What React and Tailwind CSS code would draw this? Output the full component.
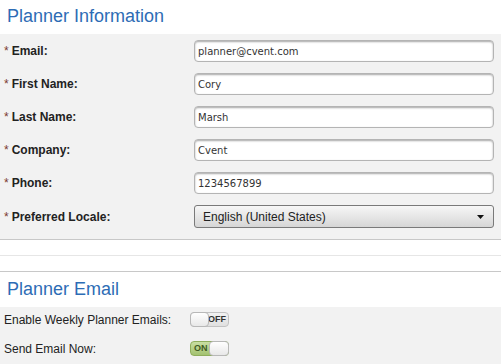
const fields = [
  { label: 'Email:', value: 'planner@cvent.com' },
  { label: 'First Name:', value: 'Cory' },
  { label: 'Last Name:', value: 'Marsh' },
  { label: 'Company:', value: 'Cvent' },
  { label: 'Phone:', value: '1234567899' },
];

function Label({ children }) {
  return (
    <div className="w-[190px] shrink-0 pl-[4px] text-[12px] font-bold text-[#222]">
      <span className="text-[#7c3a30] font-normal mr-[3px]">*</span>
      {children}
    </div>
  );
}

function Toggle({ on }) {
  return (
    <div className={`relative w-[39px] h-[15px] rounded-[4px] border flex items-center ${on ? 'border-[#8fae5c] bg-gradient-to-b from-[#c8dea2] to-[#a3c270]' : 'border-[#c2c2c2] bg-gradient-to-b from-[#f2f2f2] to-[#e0e0e0]'}`}>
      {on ? (
        <>
          <span className="text-[9px] font-bold text-[#3f5a22] pl-[3px] leading-none">ON</span>
          <span className="absolute right-[-1px] top-[-1px] w-[20px] h-[15px] rounded-[4px] border border-[#b8b8b8] bg-gradient-to-b from-white to-[#e8e8e8]" />
        </>
      ) : (
        <>
          <span className="absolute left-[-1px] top-[-1px] w-[19px] h-[15px] rounded-[4px] border border-[#b8b8b8] bg-gradient-to-b from-white to-[#e8e8e8]" />
          <span className="ml-auto text-[9px] font-bold text-[#333] pr-[2px] leading-none">OFF</span>
        </>
      )}
    </div>
  );
}

export default function App() {
  return (
    <div className="w-[501px] h-[364px] overflow-hidden bg-white" style={{ fontFamily: '"Liberation Sans", Arial, sans-serif' }}>
      <div className="h-[34px] bg-white pl-[7px] pt-[5px]">
        <h2 className="text-[18px] leading-[22px] text-[#2d6cb5]">Planner Information</h2>
      </div>

      <div className="bg-[#f2f2f2] pt-[6px] pb-[11px] flex flex-col gap-[11px]">
        {fields.map((f) => (
          <div key={f.label} className="flex items-center h-[22px]">
            <Label>{f.label}</Label>
            <div
              className="ml-[4px] w-[300px] h-[22px] rounded-[4px] border border-[#b4b4b4] bg-white shadow-[inset_0_1px_2px_rgba(0,0,0,0.35)] flex items-center pl-[3px] text-[10px] text-[#333]"
              style={{ fontFamily: '"DejaVu Sans", Tahoma, sans-serif' }}
            >
              {f.value}
            </div>
          </div>
        ))}
        <div className="flex items-center h-[23px]">
          <Label>Preferred Locale:</Label>
          <div className="ml-[4px] w-[300px] h-[23px] rounded-[3px] border border-[#7a7a7a] bg-gradient-to-b from-[#f7f7f7] to-[#d6d6d6] flex items-center justify-between pl-[8px] pr-[9px] text-[12px] text-[#222]">
            <span>English (United States)</span>
            <svg width="7" height="4" viewBox="0 0 7 4">
              <path d="M0 0h7L3.5 4z" fill="#111" />
            </svg>
          </div>
        </div>
      </div>

      <div className="h-[16px] border-t border-[#c8c8c8] bg-white" />
      <div className="h-[16px] border-t border-[#e6e6e6] bg-white" />
      <div className="border-t border-[#c8c8c8]">
        <div className="bg-white h-[35px] pl-[7px] pt-[6px]">
          <h2 className="text-[18px] leading-[22px] text-[#2d6cb5]">Planner Email</h2>
        </div>
      </div>

      <div className="bg-[#f2f2f2] pt-[5px] h-[60px] flex flex-col gap-[14px]">
        <div className="flex items-center h-[15px]">
          <div className="w-[190px] pl-[4px] text-[12px] text-[#222]">Enable Weekly Planner Emails:</div>
          <Toggle on={false} />
        </div>
        <div className="flex items-center h-[15px]">
          <div className="w-[190px] pl-[4px] text-[12px] text-[#222]">Send Email Now:</div>
          <Toggle on />
        </div>
      </div>
    </div>
  );
}
